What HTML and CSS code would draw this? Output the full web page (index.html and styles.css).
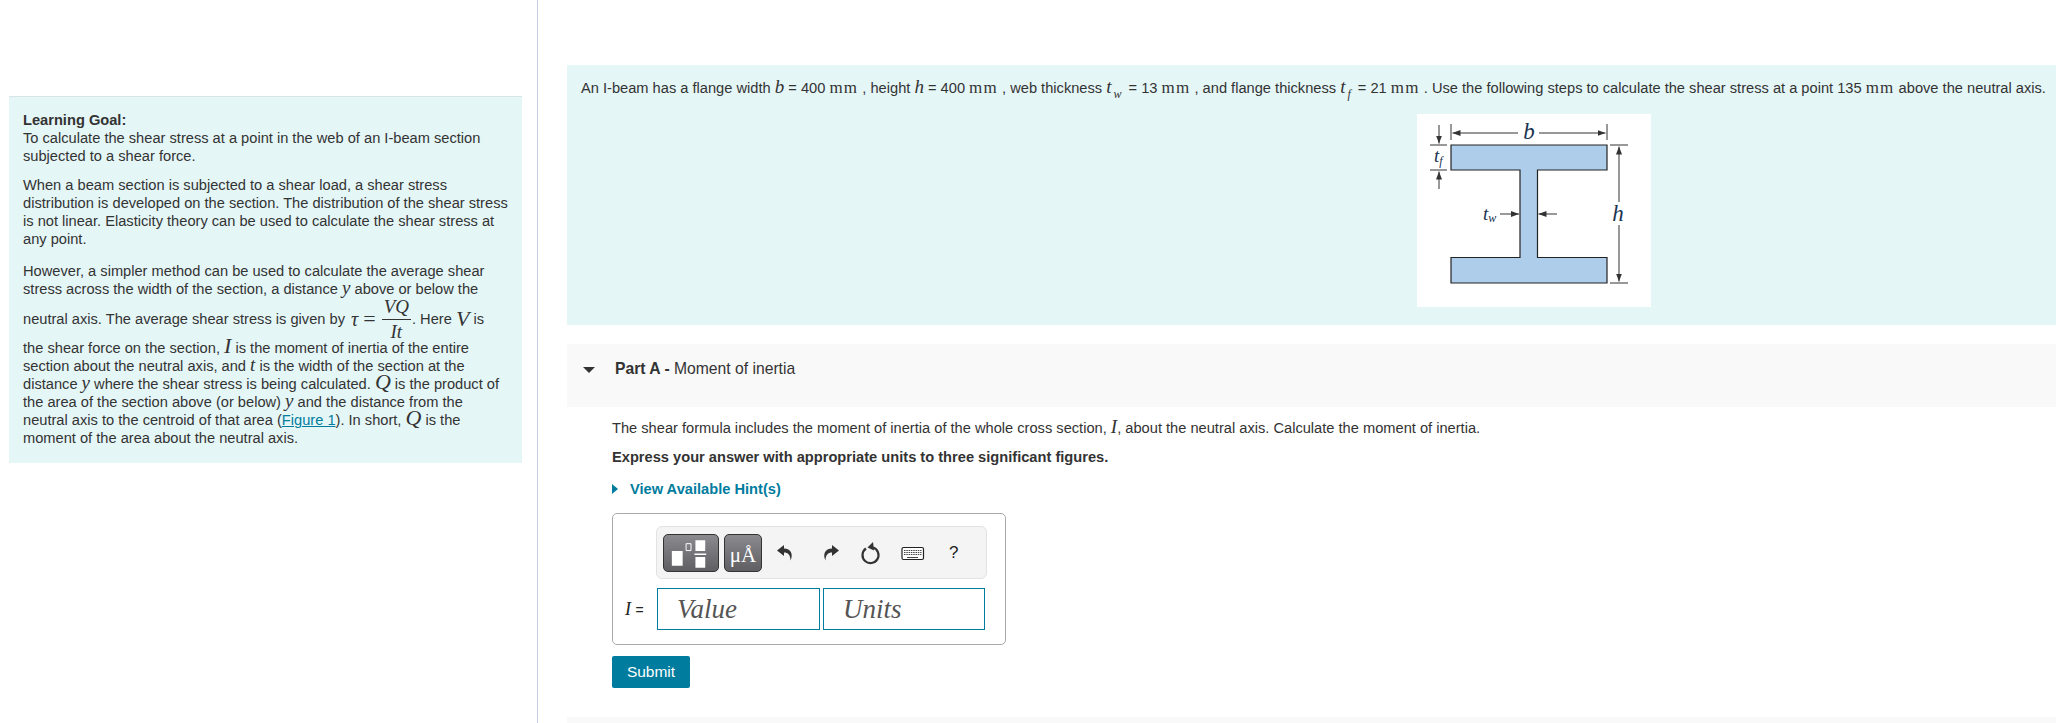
FILE: index.html
```html
<!DOCTYPE html>
<html lang="en">
<head>
<meta charset="UTF-8" />
<title>Part A - Moment of inertia</title>
<link rel="stylesheet" href="styles.css">
</head>
<body>

<!-- LEFT: learning goal -->
<div class="side">
    <div class="goal">
        <p class="goal-intro"><b>Learning Goal:</b><br>To calculate the shear stress at a point in the web of an I-beam section subjected to a shear force.</p>
        <p>When a beam section is subjected to a shear load, a shear stress distribution is developed on the section. The distribution of the shear stress is not linear. Elasticity theory can be used to calculate the shear stress at any point.</p>
        <p class="goal-last">However, a simpler method can be used to calculate the average shear stress across the width of the section, a distance <i class="m">y</i> above or below the<br>
        <span class="frac-line">neutral axis. The average shear stress is given by <i class="m tau">τ</i><span class="m eq">=</span><span class="frac"><i class="m top">VQ</i><i class="m">It</i></span>. Here <i class="m big">V</i> is</span>
        the shear force on the section, <i class="m big">I</i> is the moment of inertia of the entire section about the neutral axis, and <i class="m">t</i> is the width of the section at the distance <i class="m">y</i> where the shear stress is being calculated. <i class="m big">Q</i> is the product of the area of the section above (or below) <i class="m">y</i> and the distance from the neutral axis to the centroid of that area (<a href="#">Figure 1</a>). In short, <i class="m big">Q</i> is the moment of the area about the neutral axis.</p>
    </div>
</div>

<!-- RIGHT: problem -->
<div class="main">
    <div class="intro">
        <p>An I-beam has a flange width <i class="m">b</i> = 400 <span class="m unit">mm</span> , height <i class="m">h</i> = 400 <span class="m unit">mm</span> , web thickness <i class="m">t<sub>w</sub></i> = 13 <span class="m unit">mm</span> , and flange thickness <i class="m">t<sub>f</sub></i> = 21 <span class="m unit">mm</span> . Use the following steps to calculate the shear stress at a point 135 <span class="m unit">mm</span> above the neutral axis.</p>
        <div class="figure">
            <svg width="234" height="193" viewBox="0 0 234 193">
                <defs>
                    <marker id="tip" viewBox="0 0 8 6" refX="8" refY="3" markerWidth="8" markerHeight="6" orient="auto-start-reverse">
                        <path d="M0 0L8 3L0 6z" fill="#333"/>
                    </marker>
                </defs>
                <path class="beam" d="M34 31H190V56H120.500V143.500H190V169H34V143.500H103V56H34z"/>
                <g class="dim">
                    <path d="M34 10V26M190 10V26M101 19H35.500" marker-end="url(#tip)"/>
                    <path d="M122 19H188.500" marker-end="url(#tip)"/>
                    <path d="M13 31H30M13 56H30M22 11V29.500" marker-end="url(#tip)"/>
                    <path d="M22 75V57.500" marker-end="url(#tip)"/>
                    <path d="M83 100H102" marker-end="url(#tip)"/>
                    <path d="M140 100H121.500" marker-end="url(#tip)"/>
                    <path d="M193 31H211M193 169H211M202 88V32.500" marker-end="url(#tip)"/>
                    <path d="M202 111V167.500" marker-end="url(#tip)"/>
                </g>
                <text class="lbl" x="112" y="25">b</text>
                <text class="lbl" x="201" y="107">h</text>
                <text class="lbl-sm" x="17" y="48">t<tspan class="lbl-sub" dy="3">f</tspan></text>
                <text class="lbl-sm" x="66" y="106">t<tspan class="lbl-sub" dy="2">w</tspan></text>
            </svg>
        </div>
    </div>

    <div class="part-head">
        <span class="arrow-down"></span>
        <span><b>Part A -</b> Moment of inertia</span>
    </div>

    <div class="part-body">
        <p class="ask">The shear formula includes the moment of inertia of the whole cross section, <i class="m">I</i>, about the neutral axis. Calculate the moment of inertia.</p>
        <p class="express">Express your answer with appropriate units to three significant figures.</p>
        <div class="hint"><span class="arrow-right"></span><a href="#">View Available Hint(s)</a></div>

        <div class="answer">
            <div class="toolbar">
                <div class="tool-btn wide">
                    <svg width="55" height="36" viewBox="0 0 55 36">
                        <path class="solid" d="M8 16H19V31H8z"/>
                        <path class="hollow" d="M22.500 8.500H27.500V15.500H22.500z"/>
                        <path class="solid" d="M32 5H42V16H32zM32 22H42V33H32zM31 18.500H43V20H31z"/>
                    </svg>
                </div>
                <div class="tool-btn narrow"><span>μÅ</span></div>
                <svg class="tool" style="margin-left:13px" width="22" height="22" viewBox="0 0 22 22"><path d="M9 3L2 8.500L9 14V10.500C13 10.500 15.500 13 15.500 18.500C18.500 12.500 16 6.500 9 6.500z"/></svg>
                <svg class="tool" style="margin-left:22px" width="22" height="22" viewBox="0 0 22 22"><path d="M13 3L20 8.500L13 14V10.500C9 10.500 6.500 13 6.500 18.500C3.500 12.500 6 6.500 13 6.500z"/></svg>
                <svg class="tool" style="margin-left:19px" width="22" height="24" viewBox="0 0 22 24"><path class="ring" d="M6 7.500A8 8 0 1 0 13 6.500"/><path d="M13 1L7.500 6.500L14 9.500z"/></svg>
                <svg class="tool" style="margin-left:19px" width="24" height="16" viewBox="0 0 24 16"><rect class="key-box" x="1" y="2.500" width="21.500" height="12" rx="1.500"/><path class="keys" d="M3 5.500H20.500M3 7.500H20.500M3 9.500H20.500"/><path class="keys2" d="M6 12.500H17"/></svg>
                <span class="help">?</span>
            </div>
            <div class="entry">
                <span class="entry-label"><i>I</i> <small>=</small></span>
                <div class="field">Value</div>
                <div class="field units">Units</div>
            </div>
        </div>

        <button class="submit">Submit</button>
    </div>

    <div class="strip"></div>
</div>

</body>
</html>
```

FILE: styles.css
```css
*{
    margin:0;
    padding:0;
    box-sizing:border-box;
}

html, body{
    height:723px;
    overflow:hidden;
}

body{
    display:flex;
    font-family:'Liberation Sans',Arial,sans-serif;
    font-size:14.65px;
    line-height:18px;
    color:#333;
    background:#fff;
}

a{
    color:#007c9e;
}

/* math */
.m{
    font-family:'Liberation Serif',serif;
    font-size:19px;
    line-height:0;
}

.m.big{
    font-size:22px;
}

.m.unit{
    font-size:17px;
    letter-spacing:1.200px;
}

.m.tau{
    font-size:20px;
    margin-left:2px;
}

.m.eq{
    font-size:22px;
    margin-left:5px;
}

sub{
    font-size:12px;
    line-height:0;
    margin:0 3px 0 2px;
}

/* left column */
.side{
    width:538px;
    flex:none;
    height:723px;
    padding:96px 15px 0 9px;
    border-right:1px solid #c4cfe6;
}

.goal{
    background:#e5f6f7;
    border-top:1px solid #d9e4e6;
    padding:14px 14px 16px 14px;
}

.goal p{
    margin-bottom:11px;
}

.goal .goal-last{
    margin-bottom:0;
    margin-top:14px;
}

.goal-last .frac-line{
    display:flex;
    align-items:center;
    white-space:pre-wrap;
    height:40px;
    margin-top:1px;
}

.frac{
    display:inline-flex;
    flex-direction:column;
    align-items:center;
    margin:0 0 0 5px;
    padding:0 1px;
}

.frac .m{
    line-height:24px;
}

.frac .top{
    border-bottom:1px solid #333;
    padding:0 2px;
}

/* right column */
.main{
    flex:1;
    min-width:0;
    padding:65px 0 0 29px;
}

.intro{
    background:#e5f6f7;
    height:260px;
    padding:14px 10px 0 14px;
    white-space:nowrap;
}

.figure{
    width:234px;
    height:193px;
    margin:17px 0 0 836px;
    background:#fff;
}

.figure svg{
    display:block;
}

.beam{
    fill:#aecdeb;
    stroke:#222;
    stroke-width:1.200;
}

.dim path{
    fill:none;
    stroke:#333;
    stroke-width:1;
}

.lbl{
    font:italic 23px 'Liberation Serif',serif;
    fill:#1a3350;
    text-anchor:middle;
}

.lbl-sm{
    font:italic 19px 'Liberation Serif',serif;
    fill:#1a3350;
}

.lbl-sub{
    font-size:12px;
}

.part-head{
    margin-top:19px;
    height:63px;
    background:#f9f9f9;
    display:flex;
    align-items:flex-start;
    padding:16px 0 0 16px;
    font-size:15.7px;
}

.arrow-down{
    width:0;
    height:0;
    margin:7px 20px 0 0;
    border-left:6px solid transparent;
    border-right:6px solid transparent;
    border-top:6px solid #333;
}

.part-body{
    padding:12px 0 0 45px;
}

.express{
    margin-top:11px;
    font-weight:700;
}

.hint{
    margin-top:14px;
    display:flex;
    align-items:center;
    font-weight:700;
}

.hint a{
    text-decoration:none;
}

.arrow-right{
    width:0;
    height:0;
    margin-right:12px;
    border-top:5px solid transparent;
    border-bottom:5px solid transparent;
    border-left:6px solid #007c9e;
}

.answer{
    width:394px;
    height:132px;
    margin-top:15px;
    border:1px solid #aaa;
    border-radius:5px;
    padding:12px 18px 0 12px;
}

.toolbar{
    margin-left:31px;
    height:53px;
    background:#f4f4f4;
    border:1px solid #e2e2e2;
    border-radius:6px;
    padding:6px;
    display:flex;
    align-items:center;
}

.tool-btn{
    height:38px;
    border:1px solid #333;
    border-radius:5px;
    background:linear-gradient(#8a8a8f,#5f5f63);
    display:flex;
    align-items:center;
    justify-content:center;
}

.tool-btn.wide{
    width:56px;
    margin-right:5px;
    overflow:hidden;
}

.tool-btn.narrow{
    width:38px;
    color:#fff;
    font:21px 'Liberation Serif',serif;
    padding-top:6px;
}

.solid{
    fill:#fff;
}

.hollow{
    fill:none;
    stroke:#fff;
    stroke-width:1;
}

.tool path{
    fill:#333;
}

.tool .ring{
    fill:none;
    stroke:#333;
    stroke-width:2.200;
}

.tool .key-box{
    fill:#fff;
    stroke:#222;
    stroke-width:1.200;
}

.tool .keys{
    fill:none;
    stroke:#444;
    stroke-width:1;
    stroke-dasharray:1.500 .8;
}

.tool .keys2{
    fill:none;
    stroke:#444;
    stroke-width:1;
}

.help{
    margin-left:24px;
    font-size:17px;
    color:#222;
}

.entry{
    display:flex;
    align-items:center;
    margin-top:9px;
}

.entry-label{
    width:32px;
    padding-top:1px;
    font:18px 'Liberation Serif',serif;
    white-space:nowrap;
    color:#222;
}

.entry-label small{
    font:14px 'Liberation Sans',Arial,sans-serif;
}

.field{
    width:163px;
    height:42px;
    border:1px solid #007c9e;
    margin-right:3px;
    padding:0 0 0 19px;
    font:italic 27px/40px 'Liberation Serif',serif;
    color:#555;
}

.field.units{
    width:162px;
    margin-right:0;
}

.submit{
    display:block;
    width:78px;
    height:32px;
    margin-top:11px;
    border:none;
    border-radius:2px;
    background:#007c9e;
    color:#fff;
    font:15.500px 'Liberation Sans',Arial,sans-serif;
}

.strip{
    margin-top:29px;
    height:6px;
    background:#f9f9f9;
}
```
